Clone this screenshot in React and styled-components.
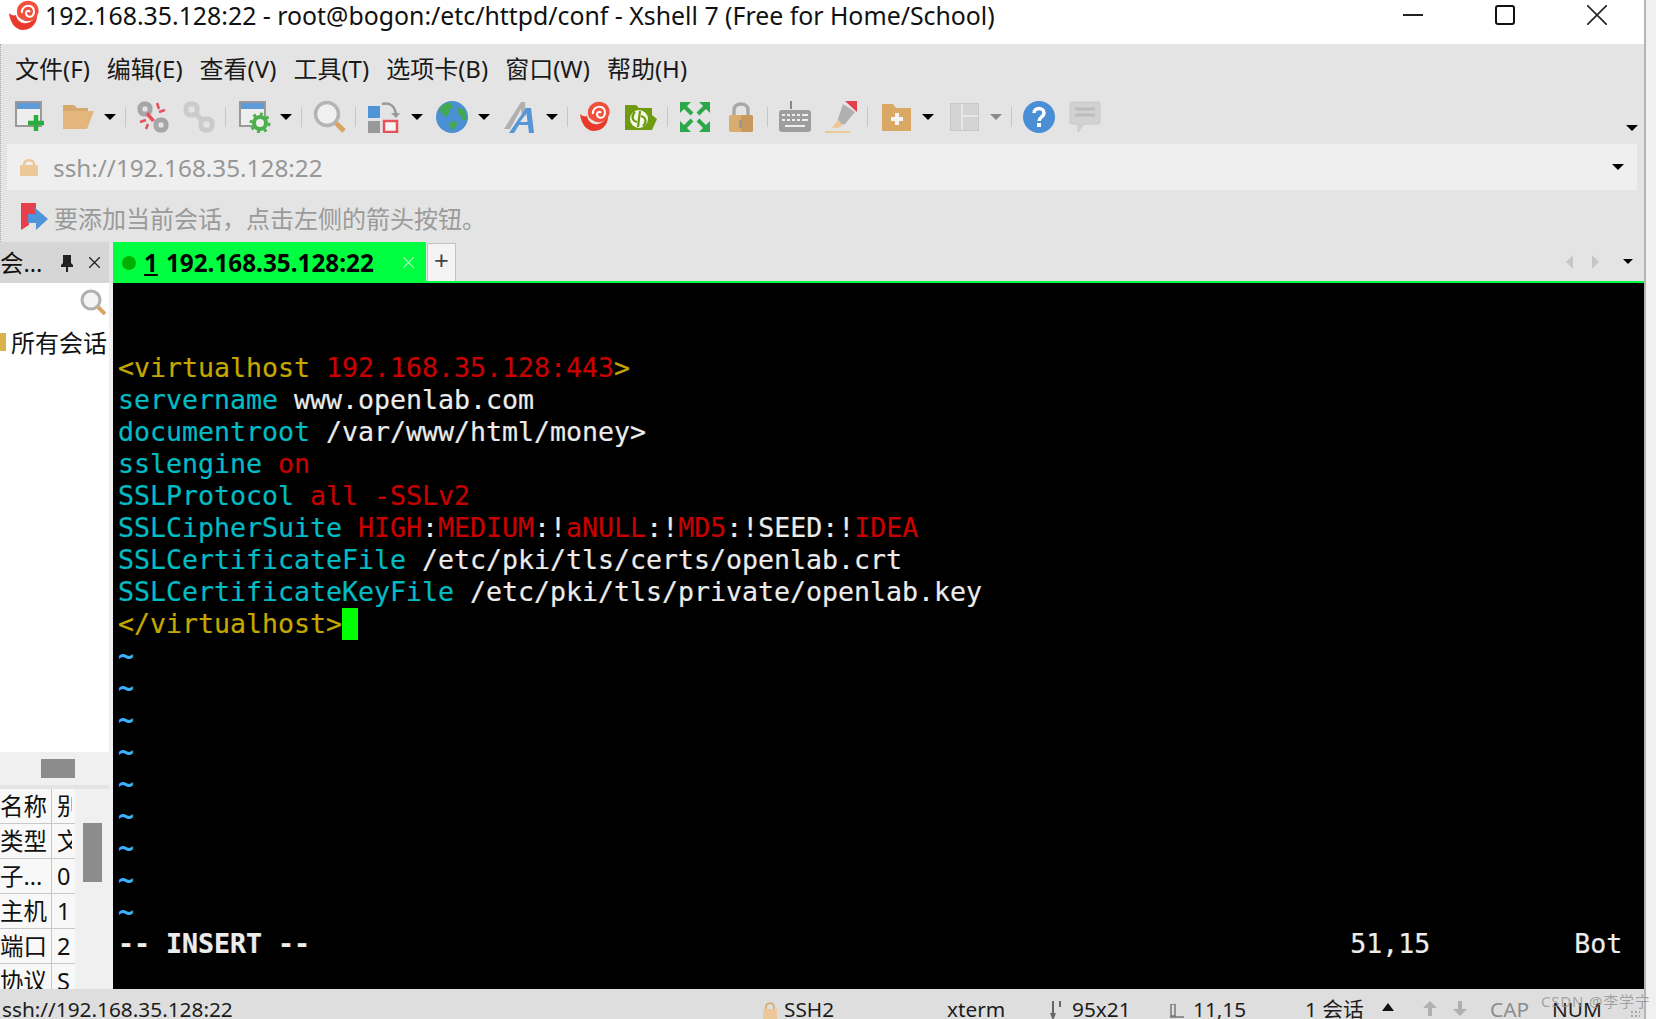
import React from 'react';
import styled, { createGlobalStyle } from 'styled-components';

const UI_FONT = `"Noto Sans", "Noto Sans CJK SC", sans-serif`;
const MONO_FONT = `"DejaVu Sans Mono", "Liberation Mono", monospace`;

const GlobalStyle = createGlobalStyle`
  html, body {
    margin: 0;
    padding: 0;
    width: 1656px;
    height: 1019px;
    overflow: hidden;
    background: #f0f0f0;
  }
`;

const Page = styled.div`
  width: 1656px;
  height: 1019px;
  display: flex;
  overflow: hidden;
  position: relative;
  font-family: ${UI_FONT};
`;

const Win = styled.div`
  width: 1644px;
  height: 1019px;
  display: flex;
  flex-direction: column;
  flex: none;
`;

const Edge = styled.div`
  flex: 1;
  border-left: 2px solid #b4b4b4;
  background: #f0f0f0;
`;

const TitleBar = styled.div`
  height: 44px;
  flex: none;
  box-sizing: border-box;
  background: #fff;
  display: flex;
  align-items: center;
  padding: 0 0 12px 8px;
  color: #111;
`;

const TitleText = styled.div`
  font-size: 24.85px;
  line-height: 28px;
  margin-left: 5px;
  flex: 1;
  white-space: nowrap;
  position: relative;
  top: -1px;
`;

const WinButtons = styled.div`
  display: flex;
  align-items: center;
  gap: 72px;
  padding-right: 37px;
  margin-top: -2px;
`;

const Chrome = styled.div`
  flex: none;
  background: #e4e4e4;
  border-left: 1px dotted #a8a8a8;
`;

const MenuBar = styled.div`
  height: 48px;
  box-sizing: border-box;
  display: flex;
  align-items: center;
  padding: 0 0 2px 14px;
  gap: 17px;
  font-size: 24px;
  color: #1a1a1a;
`;

const MenuItem = styled.span`
  white-space: nowrap;
`;

const ToolBar = styled.div`
  height: 52px;
  box-sizing: border-box;
  display: flex;
  align-items: center;
  padding: 0 0 3px 14px;
`;

const Tool = styled.svg`
  flex: none;
  margin-left: ${p => p.$ml || 0}px;
  filter: blur(0.5px);
  opacity: ${p => p.$dim ? 0.55 : 1};
`;

const ToolSep = styled.div`
  flex: none;
  width: 1px;
  height: 20px;
  background: #c6c6c6;
  margin-left: ${p => p.$ml}px;
`;

const Caret = styled.i`
  flex: none;
  width: 0;
  height: 0;
  display: block;
  margin-left: ${p => p.$ml || 0}px;
  border-left: ${p => p.$s || 6}px solid transparent;
  border-right: ${p => p.$s || 6}px solid transparent;
  border-top: ${p => p.$s || 6}px solid ${p => p.$c || '#000'};
`;

const ToolEnd = styled.div`
  margin: 33px 0 0 auto;
  align-self: flex-start;
  padding-right: 6px;
`;

const AddressBar = styled.div`
  height: 46px;
  margin: 0 7px 0 6px;
  background: #efefef;
  display: flex;
  align-items: center;
  padding-left: 13px;
  color: #979797;
  font-size: 24.3px;
`;

const AddressText = styled.span`
  margin-left: 15px;
  flex: 1;
`;

const AddressCaret = styled.div`
  padding-right: 13px;
`;

const HintBar = styled.div`
  height: 52px;
  box-sizing: border-box;
  display: flex;
  align-items: center;
  padding: 2px 0 0 19px;
  color: #9a9a9a;
  font-size: 24px;
`;

const HintText = styled.span`
  margin-left: 6px;
`;

const TabRow = styled.div`
  height: 41px;
  flex: none;
  background: #e4e4e4;
  display: flex;
`;

const SideTab = styled.div`
  width: 109px;
  flex: none;
  background: #d6d6d6;
  display: flex;
  align-items: center;
  font-size: 23.5px;
  color: #111;
`;

const SideTabLabel = styled.span`
  flex: 1;
  white-space: nowrap;
  position: relative;
  top: -1px;
`;

const SideTabIcon = styled.svg`
  flex: none;
  margin-right: ${p => p.$mr}px;
`;

const TabStrip = styled.div`
  flex: 1;
  margin-left: 4px;
  border-bottom: 2px solid #00ff40;
  display: flex;
  align-items: stretch;
`;

const ActiveTab = styled.div`
  width: 313px;
  background: #00ff40;
  margin-bottom: -2px;
  display: flex;
  align-items: center;
  padding-left: 9px;
  box-sizing: border-box;
  font-size: 24.3px;
  font-weight: 700;
  color: #000;
`;

const Dot = styled.span`
  width: 14px;
  height: 14px;
  border-radius: 50%;
  background: #00b000;
  flex: none;
  margin-right: 8px;
`;

const TabNum = styled.span`
  text-decoration: underline;
  margin-right: 8px;
`;

const TabClose = styled.svg`
  margin-left: auto;
  margin-right: 12px;
`;

const AddTab = styled.div`
  width: 29px;
  margin: 1px 0 0 1px;
  box-sizing: border-box;
  background: #f4f4f4;
  border: 1px solid #c2c2c2;
  border-bottom: none;
  font-size: 26px;
  line-height: 32px;
  text-align: center;
  color: #444;
`;

const TabNav = styled.div`
  margin-left: auto;
  display: flex;
  align-items: center;
  padding-right: 11px;
`;

const NavArrow = styled.i`
  display: block;
  width: 0;
  height: 0;
  margin-left: ${p => p.$ml}px;
  border-top: 7px solid transparent;
  border-bottom: 7px solid transparent;
  ${p => p.$left ? 'border-right: 7px solid #c6c6c6;' : 'border-left: 7px solid #c6c6c6;'}
`;

const Main = styled.div`
  flex: 1;
  min-height: 0;
  display: flex;
`;

const Sidebar = styled.div`
  width: 113px;
  flex: none;
  background: #f0f0f0;
  display: flex;
  flex-direction: column;
  overflow: hidden;
`;

const TreePanel = styled.div`
  height: 469px;
  width: 109px;
  flex: none;
  background: #fff;
`;

const SearchRow = styled.div`
  height: 38px;
  display: flex;
  align-items: center;
  justify-content: flex-end;
  padding-right: 3px;
`;

const TreeRow = styled.div`
  display: flex;
  align-items: center;
  height: 40px;
  font-size: 24px;
  color: #111;
  white-space: nowrap;
`;

const TreeLabel = styled.span`
  margin-left: 5px;
`;

const SplitBar = styled.div`
  height: 33px;
  flex: none;
  width: 109px;
  display: flex;
  align-items: center;
  justify-content: center;
`;

const SplitGrip = styled.div`
  width: 34px;
  height: 19px;
  background: #8c8c8c;
  transform: translateX(3px);
`;

const SplitLine = styled.div`
  height: 4px;
  flex: none;
  width: 109px;
  background: #e4e4e4;
`;

const InfoArea = styled.div`
  flex: 1;
  min-height: 0;
  display: flex;
`;

const InfoTable = styled.div`
  width: 75px;
  flex: none;
  background: #f8f8f8;
`;

const InfoRow = styled.div`
  display: grid;
  grid-template-columns: 52px 20px;
  height: 35px;
  box-sizing: border-box;
  border-bottom: 1px solid #c8c8c8;
  font-size: 23.5px;
  line-height: 34px;
  color: #111;
`;

const InfoCell = styled.div`
  overflow: hidden;
  white-space: nowrap;
  padding-left: ${p => p.$pad || 0}px;
  border-right: ${p => p.$first ? '1px solid #c8c8c8' : 'none'};
`;

const ScrollThumb = styled.div`
  width: 19px;
  height: 59px;
  background: #8c8c8c;
  margin: 34px 0 0 8px;
`;

const Terminal = styled.div`
  flex: 1;
  background: #000;
  padding: 5px 0 0 5px;
  font-family: ${MONO_FONT};
  font-size: 26.58px;
  -webkit-text-stroke: 0.2px;
  overflow: hidden;
  color: #ececec;
`;

const TermRow = styled.div`
  height: 32px;
  line-height: 32px;
  white-space: pre;
`;

const COLORS = { y: '#c4a800', r: '#c80000', c: '#00bcc4', w: '#ececec', t: '#3fb0f4' };

const Seg = styled.span`
  color: ${p => COLORS[p.$c]};
  font-weight: ${p => p.$bold ? 700 : 'inherit'};
`;

const Cursor = styled.span`
  display: inline-block;
  width: 16px;
  height: 32px;
  background: #00ff00;
  vertical-align: top;
`;

const StatusBar = styled.div`
  height: 30px;
  flex: none;
  background: #dedede;
  display: flex;
  overflow: hidden;
  font-size: 20.8px;
  color: #1c1c1c;
`;

const StatusCell = styled.div`
  width: ${p => p.$w}px;
  flex: none;
  height: 30px;
  box-sizing: border-box;
  padding: 1px 0 0 ${p => p.$pad || 0}px;
  display: flex;
  align-items: flex-start;
  white-space: nowrap;
  line-height: 38px;
  color: ${p => p.$grey ? '#8c8c8c' : 'inherit'};
`;

const StatusIcon = styled.svg`
  flex: none;
  margin: ${p => p.$mt || 5}px ${p => p.$mr || 6}px 0 0;
`;

const Watermark = styled.div`
  position: absolute;
  left: 1541px;
  top: 990px;
  font-size: 15px;
  letter-spacing: 0.8px;
  color: rgba(150, 150, 150, 0.85);
  white-space: nowrap;
`;

const Grip = styled.div`
  position: absolute;
  right: 16px;
  bottom: 0;
  width: 10px;
  height: 9px;
  background-image: radial-gradient(#a8a8a8 1.2px, transparent 1.4px);
  background-size: 4px 4px;
`;

const Snail = ({ size = 32, ...rest }) => (
  <Tool width={size} height={size} viewBox="0 0 32 32" {...rest}>
    <path d="M1 13 C3 15 6 16 8 15 C9 21 14 24 19 23 C24 22 28 18 29 13 C30 21 25 30 15 30 C7 30 2 22 1 13Z" fill="#e8392c" />
    <path d="M9 13 C8 5 15 0 22 1 C29 2 32 9 30 14 C28 20 21 23 15 20 C11 18 9 16 9 13Z" fill="#f0503c" />
    <path d="M14 13 C13 8 18 5 22 6 C26 7 27 12 25 15 C23 18 18 17 18 13 C18 11 21 10 22 12" fill="none" stroke="#fff" strokeWidth="2" />
  </Tool>
);

const ToolBarIcons = () => (
  <ToolBar>
    {/* new session */}
    <Tool width="31" height="31" viewBox="0 0 31 31">
      <rect x="1" y="1" width="25" height="24" fill="#eee" stroke="#999" strokeWidth="2" />
      <rect x="2" y="2" width="23" height="6" fill="#5b9bd8" />
      <path d="M21 14v16M13 22h16" stroke="#27ae3c" strokeWidth="4.5" />
    </Tool>
    {/* open folder */}
    <Tool width="32" height="27" viewBox="0 0 32 27" $ml={16}>
      <path d="M1 2h11l3 3h11v4H1z" fill="#d6aa6c" />
      <path d="M1 8h31l-7 18H1z" fill="#e2b67c" />
    </Tool>
    <Caret $ml={10} />
    <ToolSep $ml={9} />
    {/* disconnect */}
    <Tool width="32" height="32" viewBox="0 0 32 32" $ml={11}>
      <g fill="none" stroke="#a6a6a6" strokeWidth="5">
        <rect x="3" y="3" width="10" height="10" rx="4" />
        <rect x="19" y="19" width="10" height="10" rx="4" />
      </g>
      <path d="M11 11l7 8-3 2-6-7z" fill="#e8505a" />
      <path d="M20 2l2 6M28 9l-6 2M3 21l6-2M9 28l2-5" stroke="#e8505a" strokeWidth="2.5" />
    </Tool>
    {/* connect, disabled */}
    <Tool width="32" height="32" viewBox="0 0 32 32" $ml={14} $dim>
      <g fill="none" stroke="#b8b8b8" strokeWidth="5">
        <rect x="3" y="3" width="11" height="11" rx="4" />
        <rect x="18" y="18" width="11" height="11" rx="4" />
        <path d="M12 12l8 8" />
      </g>
    </Tool>
    <ToolSep $ml={10} />
    {/* properties */}
    <Tool width="32" height="32" viewBox="0 0 32 32" $ml={13}>
      <rect x="1" y="1" width="25" height="24" fill="#eee" stroke="#999" strokeWidth="2" />
      <rect x="2" y="2" width="23" height="6" fill="#5b9bd8" />
      <circle cx="21" cy="22" r="6" fill="#eee" stroke="#4cb04c" strokeWidth="4" />
      <circle cx="21" cy="22" r="9" fill="none" stroke="#4cb04c" strokeWidth="3" strokeDasharray="3 4" />
    </Tool>
    <Caret $ml={9} />
    <ToolSep $ml={9} />
    {/* find */}
    <Tool width="33" height="33" viewBox="0 0 33 33" $ml={11}>
      <circle cx="14" cy="14" r="11.5" fill="#f0f0f0" stroke="#b4b4b4" strokeWidth="3.5" />
      <path d="M23 23l8 8" stroke="#d9a464" strokeWidth="5" />
    </Tool>
    <ToolSep $ml={9} />
    {/* transfer */}
    <Tool width="32" height="32" viewBox="0 0 32 32" $ml={12}>
      <rect x="0" y="5" width="12" height="12" fill="#4f94d8" />
      <rect x="0" y="20" width="12" height="12" fill="#999" />
      <rect x="16" y="20" width="13" height="11" fill="#f4f4f4" stroke="#e8505a" strokeWidth="2.5" />
      <path d="M14 3c8-2 13 2 14 11" fill="none" stroke="#999" strokeWidth="2.5" />
      <path d="M23 12h9l-4 5z" fill="#999" />
    </Tool>
    <Caret $ml={11} />
    {/* globe */}
    <Tool width="32" height="32" viewBox="0 0 32 32" $ml={13}>
      <circle cx="16" cy="16" r="16" fill="#4b8fd4" />
      <path d="M3 8c3-4 8-7 12-6l2 4-4 4-1 6-5-2zM22 6l7 4 2 8-4 2-2-5-4-3zM13 21l7-1 1 4-5 6-2-4z" fill="#43a852" />
    </Tool>
    <Caret $ml={10} />
    {/* font */}
    <Tool width="32" height="32" viewBox="0 0 32 32" $ml={14}>
      <path d="M0 28L17 1h4l1 14h-4l-1-7-11 20z" fill="#b0b0b0" />
      <path d="M5 32L22 7h5l3 25h-5l-1-8h-9l-5 8zM16 21h7.5l-1-9z" fill="#5596d8" fillRule="evenodd" />
    </Tool>
    <Caret $ml={10} />
    <ToolSep $ml={9} />
    <Snail $ml={11} />
    {/* xftp folder */}
    <Tool width="32" height="28" viewBox="0 0 32 28" $ml={14}>
      <path d="M0 2h11l3 3h13v7l5 4-5 11H0z" fill="#6f9b10" />
      <circle cx="14" cy="16" r="9" fill="#f4f8e8" />
      <path d="M10 9c-4 4-3 9 2 10M18 23c4-4 3-9-2-10M15 8l-2 16" fill="none" stroke="#6f9b10" strokeWidth="2.2" />
    </Tool>
    <ToolSep $ml={10} />
    {/* fullscreen */}
    <Tool width="30" height="30" viewBox="0 0 30 30" $ml={12}>
      <g fill="#2aa84a">
        <path d="M0 0h11L0 11z" />
        <path d="M30 0v11L19 0z" />
        <path d="M0 30V19l11 11z" />
        <path d="M30 30H19l11-11z" />
      </g>
      <path d="M5 5l7 7M25 5l-7 7M5 25l7-7M25 25l-7-7" stroke="#2aa84a" strokeWidth="4" />
    </Tool>
    {/* lock */}
    <Tool width="24" height="32" viewBox="0 0 24 32" $ml={19}>
      <path d="M5 15V9c0-8 14-8 14 0v6" fill="none" stroke="#a8a8a8" strokeWidth="3.5" />
      <rect x="0" y="14" width="24" height="17" rx="2" fill="#d9ad70" />
      <rect x="12" y="14" width="12" height="17" rx="2" fill="#c9985c" />
      <rect x="10" y="19" width="3" height="8" fill="#999" />
    </Tool>
    <ToolSep $ml={14} />
    {/* keyboard */}
    <Tool width="32" height="32" viewBox="0 0 32 32" $ml={11}>
      <path d="M11 0h2v8h-2z" fill="#888" />
      <rect x="0" y="9" width="32" height="22" rx="3" fill="#9e9e9e" />
      <g fill="#eee">
        <rect x="3" y="13" width="26" height="2" />
        <rect x="3" y="18" width="26" height="2" />
        <rect x="6" y="24" width="20" height="2" />
      </g>
      <path d="M7 12v9M12 12v9M17 12v9M22 12v9" stroke="#9e9e9e" strokeWidth="2" />
    </Tool>
    {/* highlighter */}
    <Tool width="32" height="32" viewBox="0 0 32 32" $ml={14}>
      <path d="M18 3l12 8-10 12-7 1 0-6z" fill="#b0b0b0" />
      <path d="M20 0h12v11z" fill="#e5404a" />
      <path d="M13 19l5 5-5 3h-6z" fill="#ecc898" />
      <rect x="0" y="30" width="25" height="2" fill="#ecc898" />
    </Tool>
    <ToolSep $ml={10} />
    {/* new folder */}
    <Tool width="29" height="28" viewBox="0 0 29 28" $ml={14}>
      <path d="M0 1h11l3 4h15v23H0z" fill="#d9a864" />
      <path d="M15 10v12M9 16h12" stroke="#f4f4f4" strokeWidth="4" />
    </Tool>
    <Caret $ml={11} />
    {/* layout, disabled */}
    <Tool width="29" height="28" viewBox="0 0 29 28" $ml={16}>
      <rect x="0.5" y="0.5" width="28" height="27" fill="#d4d4d4" stroke="#c8c8c8" />
      <path d="M12 1v26M12 13h16" stroke="#e6e6e6" strokeWidth="2" />
    </Tool>
    <Caret $ml={11} $c="#8a8a8a" />
    <ToolSep $ml={9} />
    {/* help */}
    <Tool width="32" height="32" viewBox="0 0 32 32" $ml={11}>
      <circle cx="16" cy="16" r="16" fill="#4a8ed6" />
      <path d="M11 12c0-6 10-6 10 0 0 4-5 4-5 8" fill="none" stroke="#fff" strokeWidth="3.5" />
      <rect x="14" y="22" width="4" height="4" fill="#fff" />
    </Tool>
    {/* chat, disabled */}
    <Tool width="32" height="32" viewBox="0 0 32 32" $ml={14}>
      <path d="M3 1h26a2 2 0 0 1 2 2v18a2 2 0 0 1-2 2H15l-6 8v-8H3a2 2 0 0 1-2-2V3a2 2 0 0 1 2-2z" fill="#d2d2d2" stroke="#c8c8c8" />
      <path d="M6 8h20M6 14h20" stroke="#bcbcbc" strokeWidth="3" />
    </Tool>
    <ToolEnd>
      <Caret />
    </ToolEnd>
  </ToolBar>
);

const INFO_ROWS = [
  ['名称', '别'],
  ['类型', '文'],
  ['子...', '0'],
  ['主机', '1'],
  ['端口', '2'],
  ['协议', 'S'],
];

const TILDES = Array.from({ length: 9 });

const App = () => (
  <Page>
    <GlobalStyle />
    <Win>
      <TitleBar>
        <Snail />
        <TitleText>192.168.35.128:22 - root@bogon:/etc/httpd/conf - Xshell 7 (Free for Home/School)</TitleText>
        <WinButtons>
          <svg width="20" height="20" viewBox="0 0 20 20"><path d="M0 10h20" stroke="#222" strokeWidth="2" /></svg>
          <svg width="20" height="20" viewBox="0 0 20 20"><rect x="1" y="1" width="18" height="18" rx="2" fill="none" stroke="#111" strokeWidth="2" /></svg>
          <svg width="20" height="20" viewBox="0 0 20 20"><path d="M0 0l20 20M20 0L0 20" stroke="#222" strokeWidth="1.6" /></svg>
        </WinButtons>
      </TitleBar>

      <Chrome>
        <MenuBar>
          <MenuItem>文件(F)</MenuItem>
          <MenuItem>编辑(E)</MenuItem>
          <MenuItem>查看(V)</MenuItem>
          <MenuItem>工具(T)</MenuItem>
          <MenuItem>选项卡(B)</MenuItem>
          <MenuItem>窗口(W)</MenuItem>
          <MenuItem>帮助(H)</MenuItem>
        </MenuBar>
        <ToolBarIcons />
        <AddressBar>
          <svg width="18" height="17" viewBox="0 0 18 17">
            <path d="M4 7V5c0-5 10-5 10 0v2" fill="none" stroke="#ecc898" strokeWidth="2.5" />
            <rect x="0" y="6" width="18" height="11" rx="1" fill="#ecc898" />
          </svg>
          <AddressText>ssh://192.168.35.128:22</AddressText>
          <AddressCaret><Caret /></AddressCaret>
        </AddressBar>
        <HintBar>
          <svg width="28" height="28" viewBox="0 0 28 28">
            <path d="M1 0h15v14H9v8l-8 5z" fill="#e8404a" />
            <path d="M14 4l14 12-12 11v-7H8v-9h8z" fill="#4f94d8" />
          </svg>
          <HintText>要添加当前会话，点击左侧的箭头按钮。</HintText>
        </HintBar>
      </Chrome>

      <TabRow>
        <SideTab>
          <SideTabLabel>会...</SideTabLabel>
          <SideTabIcon width="14" height="18" viewBox="0 0 14 18" $mr={15}>
            <path d="M3 1h8v8l2 2v2H8v5H6v-5H1v-2l2-2z" fill="#222" />
          </SideTabIcon>
          <SideTabIcon width="11" height="11" viewBox="0 0 11 11" $mr={9}>
            <path d="M0 0l11 11M11 0L0 11" stroke="#222" strokeWidth="1.3" />
          </SideTabIcon>
        </SideTab>
        <TabStrip>
          <ActiveTab>
            <Dot />
            <TabNum>1</TabNum>
            192.168.35.128:22
            <TabClose width="11" height="11" viewBox="0 0 11 11">
              <path d="M0 0l11 11M11 0L0 11" stroke="#b8f8c8" strokeWidth="1.2" />
            </TabClose>
          </ActiveTab>
          <AddTab>+</AddTab>
          <TabNav>
            <NavArrow $left $ml={0} />
            <NavArrow $ml={19} />
            <Caret $ml={24} $s={5} />
          </TabNav>
        </TabStrip>
      </TabRow>

      <Main>
        <Sidebar>
          <TreePanel>
            <SearchRow>
              <svg width="26" height="26" viewBox="0 0 26 26">
                <circle cx="11" cy="11" r="9" fill="#f4f4f4" stroke="#b0b0b0" strokeWidth="3" />
                <path d="M18 18l7 7" stroke="#d9a464" strokeWidth="4" />
              </svg>
            </SearchRow>
            <TreeRow>
              <svg width="6" height="22" viewBox="0 0 6 22">
                <path d="M0 3h6v18H0z" fill="#d9b24a" />
              </svg>
              <TreeLabel>所有会话</TreeLabel>
            </TreeRow>
          </TreePanel>
          <SplitBar><SplitGrip /></SplitBar>
          <SplitLine />
          <InfoArea>
            <InfoTable>
              {INFO_ROWS.map(([k, v]) => (
                <InfoRow key={k}>
                  <InfoCell $first>{k}</InfoCell>
                  <InfoCell $pad={5}>{v}</InfoCell>
                </InfoRow>
              ))}
            </InfoTable>
            <ScrollThumb />
          </InfoArea>
        </Sidebar>

        <Terminal>
          <TermRow> </TermRow>
          <TermRow> </TermRow>
          <TermRow><Seg $c="y">&lt;virtualhost </Seg><Seg $c="r">192.168.35.128:443</Seg><Seg $c="y">&gt;</Seg></TermRow>
          <TermRow><Seg $c="c">servername</Seg> www.openlab.com</TermRow>
          <TermRow><Seg $c="c">documentroot</Seg> /var/www/html/money&gt;</TermRow>
          <TermRow><Seg $c="c">sslengine</Seg> <Seg $c="r">on</Seg></TermRow>
          <TermRow><Seg $c="c">SSLProtocol</Seg> <Seg $c="r">all -SSLv2</Seg></TermRow>
          <TermRow><Seg $c="c">SSLCipherSuite</Seg> <Seg $c="r">HIGH</Seg>:<Seg $c="r">MEDIUM</Seg>:!<Seg $c="r">aNULL</Seg>:!<Seg $c="r">MD5</Seg>:!SEED:!<Seg $c="r">IDEA</Seg></TermRow>
          <TermRow><Seg $c="c">SSLCertificateFile</Seg> /etc/pki/tls/certs/openlab.crt</TermRow>
          <TermRow><Seg $c="c">SSLCertificateKeyFile</Seg> /etc/pki/tls/private/openlab.key</TermRow>
          <TermRow><Seg $c="y">&lt;/virtualhost&gt;</Seg><Cursor /></TermRow>
          {TILDES.map((_, i) => <TermRow key={i}><Seg $c="t" $bold>~</Seg></TermRow>)}
          <TermRow><Seg $bold $c="w">-- INSERT --</Seg>{' '.repeat(65)}51,15{' '.repeat(9)}Bot</TermRow>
        </Terminal>
      </Main>

      <StatusBar>
        <StatusCell $w={762} $pad={2}>ssh://192.168.35.128:22</StatusCell>
        <StatusCell $w={185} $pad={1}>
          <StatusIcon width="14" height="19" viewBox="0 0 14 19" $mt={12} $mr={7}>
            <path d="M3 8V5c0-5 8-5 8 0v3" fill="none" stroke="#d8b47c" strokeWidth="2" />
            <rect x="0" y="7" width="14" height="12" fill="#ecc898" />
          </StatusIcon>
          SSH2
        </StatusCell>
        <StatusCell $w={103}>xterm</StatusCell>
        <StatusCell $w={120}>
          <StatusIcon width="14" height="18" viewBox="0 0 14 18" $mt={11} $mr={8}>
            <path d="M3 0v16M1 12l2 5 2-5M10 0v6" stroke="#666" strokeWidth="2" fill="none" />
          </StatusIcon>
          95x21
        </StatusCell>
        <StatusCell $w={135}>
          <StatusIcon width="14" height="14" viewBox="0 0 14 14" $mt={14} $mr={9}>
            <path d="M1 0h4v12H1zM0 13h14" stroke="#777" strokeWidth="1.5" fill="none" />
          </StatusIcon>
          11,15
        </StatusCell>
        <StatusCell $w={77}>1 会话</StatusCell>
        <StatusCell $w={41}>
          <StatusIcon width="12" height="8" viewBox="0 0 12 8" $mt={13}>
            <path d="M6 0l6 8H0z" fill="#111" />
          </StatusIcon>
        </StatusCell>
        <StatusCell $w={30}>
          <StatusIcon width="14" height="15" viewBox="0 0 14 15" $mt={11}>
            <path d="M7 0l7 7H9v8H5V7H0z" fill="#b0b0b0" />
          </StatusIcon>
        </StatusCell>
        <StatusCell $w={37}>
          <StatusIcon width="14" height="15" viewBox="0 0 14 15" $mt={11}>
            <path d="M7 15l7-7H9V0H5v8H0z" fill="#b0b0b0" />
          </StatusIcon>
        </StatusCell>
        <StatusCell $w={62} $grey>CAP</StatusCell>
        <StatusCell $w={60}>NUM</StatusCell>
      </StatusBar>
    </Win>
    <Edge />
    <Watermark>CSDN @李学宁</Watermark>
    <Grip />
  </Page>
);

export default App;
